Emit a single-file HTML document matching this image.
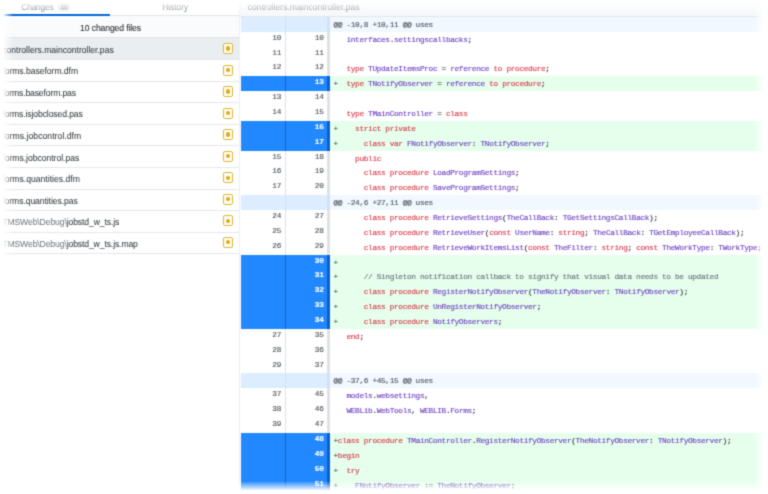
<!DOCTYPE html>
<html lang="en"><head><meta charset="utf-8"><title>Changes</title>
<style>
html,body{margin:0;padding:0;background:#fff;}
body{width:768px;height:494px;overflow:hidden;position:relative;font-family:"Liberation Sans",sans-serif;}
#app{position:absolute;left:0;top:0;width:768px;height:494px;overflow:hidden;background:#fff;filter:url(#soft);}
#side{position:absolute;left:-18.5px;top:0;width:258.9px;height:494px;background:#fff;border-right:1px solid #eceef1;box-sizing:border-box;}
#tabs{position:absolute;left:0;top:0;width:100%;height:16.2px;border-bottom:1px solid #e1e4e8;box-sizing:border-box;background:#fff;}
.tab{position:absolute;top:0;height:16.2px;line-height:14.6px;text-align:center;font-size:8.35px;color:#586069;white-space:nowrap;}
#t1{left:0;width:128.8px;letter-spacing:-0.2px;}
#t1:after{content:"";position:absolute;left:0;right:0;top:14px;height:2.3px;background:#0366d6;}
#t2{left:128.8px;width:129.8px;}
.badge{display:inline-block;letter-spacing:0;background:#dfe2e5;color:#586069;border-radius:6px;font-size:6px;line-height:8px;padding:0 3px;margin-left:4.4px;vertical-align:1px;}
#hdr{position:absolute;left:0;top:16.2px;width:100%;height:22.0px;line-height:25.4px;letter-spacing:-0.11px;background:#fafbfc;border-bottom:1px solid #e1e4e8;box-sizing:border-box;text-align:center;font-size:8.6px;color:#2c3136;padding-left:0.2px;-webkit-text-stroke:0.1px currentColor;}
.f{position:absolute;left:0;width:257.9px;height:21.52px;line-height:23.6px;border-bottom:1px solid #e4e7ea;box-sizing:border-box;font-size:8.6px;color:#363b40;white-space:nowrap;-webkit-text-stroke:0.05px currentColor;}
.f.sel{background:#ebeef1;}
.f span{position:absolute;left:20.8px;top:0;}.f em{font-style:normal;color:#737a82;}
.f i{position:absolute;left:241.1px;top:4.4px;width:10.5px;height:10.8px;box-sizing:border-box;border:1.2px solid #dfb52c;border-radius:1.8px;background:#fdfdfc;}
.f i:after{content:"";position:absolute;left:1.95px;top:2.1px;width:4.2px;height:4.2px;border-radius:50%;background:#e3aa00;}
#dh{position:absolute;left:240.4px;top:0;width:528px;height:16.6px;background:#f6f8fa;border-bottom:1px solid #e2e5e9;box-sizing:border-box;font-size:8.6px;line-height:14px;color:#6a737d;}
#dh span{position:absolute;left:7.4px;top:0;white-space:nowrap;}
#diff{position:absolute;left:240.6px;top:0;width:528px;height:494px;font-family:"Liberation Mono",monospace;font-size:7.8px;letter-spacing:-0.356px;}
.r{position:absolute;left:0;width:528px;height:14.9px;line-height:16.8px;white-space:pre;color:#24292e;}
.g1,.g2{position:absolute;top:0;height:100%;box-sizing:border-box;text-align:right;color:#4d535b;line-height:13.4px;-webkit-text-stroke:0.12px currentColor;}
.g1{left:0;width:45.4px;padding-right:4.0px;border-right:0.8px solid #dfe2e6;}
.g2{left:45.4px;width:44.1px;padding-right:3.6px;border-right:3px solid #dfe2e7;}
.t{position:absolute;left:89.5px;right:0;top:0;height:100%;padding-left:3.4px;-webkit-text-stroke:0.13px currentColor;}
.h .g1,.h .g2{background:#dbedff;border-color:#d0e2f6;}
.h .t{background:#f1f8ff;color:#4f5660;}
.a .g1,.a .g2{background:#2188ff;border-color:#0b5fcf;color:#fff;font-weight:bold;}
.a .g1{border-right-color:#1565c8;}
.a .t{background:#e6ffed;}
.t b{font-weight:normal;-webkit-text-stroke:0;color:#2f3338;}.k{color:#d73a49;}.p{color:#6f42c1;}.c{color:#6a737d;}
.fade{position:absolute;pointer-events:none;}
</style></head><body>
<svg width="0" height="0" style="position:absolute"><defs><filter id="soft" x="0" y="0" width="100%" height="100%" color-interpolation-filters="sRGB"><feConvolveMatrix order="3" kernelMatrix="0.03 0.11 0.03 0.11 0.44 0.11 0.03 0.11 0.03" divisor="1" edgeMode="duplicate" preserveAlpha="true"/></filter></defs></svg>
<div id="app">
<div id="side">
<div id="tabs"><div class="tab" id="t1">Changes<b class="badge" style="font-weight:normal">10</b></div><div class="tab" id="t2">History</div></div>
<div id="hdr">10 changed files</div>
<div class="f sel" style="top:38.2px;height:22.22px;line-height:25px"><span style="letter-spacing:-0.013px">controllers.maincontroller.pas</span><i style="top:5.1px"></i></div>
<div class="f" style="top:60.42px"><span style="letter-spacing:-0.034px">forms.baseform.dfm</span><i></i></div>
<div class="f" style="top:81.94px"><span style="letter-spacing:-0.131px">forms.baseform.pas</span><i></i></div>
<div class="f" style="top:103.46px"><span style="letter-spacing:-0.107px">forms.isjobclosed.pas</span><i></i></div>
<div class="f" style="top:124.98px"><span style="letter-spacing:0.057px">forms.jobcontrol.dfm</span><i></i></div>
<div class="f" style="top:146.50px"><span style="letter-spacing:-0.024px">forms.jobcontrol.pas</span><i></i></div>
<div class="f" style="top:168.02px"><span style="letter-spacing:0.006px">forms.quantities.dfm</span><i></i></div>
<div class="f" style="top:189.54px"><span style="letter-spacing:-0.080px">forms.quantities.pas</span><i></i></div>
<div class="f" style="top:211.06px"><span style="letter-spacing:-0.105px"><em>TMSWeb\Debug\</em>jobstd_w_ts.js</span><i></i></div>
<div class="f" style="top:232.58px"><span style="letter-spacing:-0.108px"><em>TMSWeb\Debug\</em>jobstd_w_ts.js.map</span><i></i></div>
</div>
<div id="diff">
<div class="r h" style="top:16.84px"><div class="g1"></div><div class="g2"></div><div class="t">@@ -10,8 +10,11 @@ uses</div></div>
<div class="r" style="top:31.70px"><div class="g1">10</div><div class="g2">10</div><div class="t">   <span class="p">interfaces</span>.<span class="p">settingscallbacks</span>;</div></div>
<div class="r" style="top:46.56px"><div class="g1">11</div><div class="g2">11</div><div class="t"></div></div>
<div class="r" style="top:61.42px"><div class="g1">12</div><div class="g2">12</div><div class="t">   <span class="k">type</span> <span class="p">TUpdateItemsProc</span> = <span class="p">reference</span> <span class="k">to</span> <span class="k">procedure</span>;</div></div>
<div class="r a" style="top:76.28px"><div class="g1"></div><div class="g2">13</div><div class="t"><b>+</b>  <span class="k">type</span> <span class="p">TNotifyObserver</span> = <span class="p">reference</span> <span class="k">to</span> <span class="k">procedure</span>;</div></div>
<div class="r" style="top:91.14px"><div class="g1">13</div><div class="g2">14</div><div class="t"></div></div>
<div class="r" style="top:106.00px"><div class="g1">14</div><div class="g2">15</div><div class="t">   <span class="k">type</span> <span class="p">TMainController</span> = <span class="k">class</span></div></div>
<div class="r a" style="top:120.86px"><div class="g1"></div><div class="g2">16</div><div class="t"><b>+</b>    <span class="k">strict private</span></div></div>
<div class="r a" style="top:135.72px"><div class="g1"></div><div class="g2">17</div><div class="t"><b>+</b>      <span class="k">class var</span> <span class="p">FNotifyObserver</span>: <span class="p">TNotifyObserver</span>;</div></div>
<div class="r" style="top:150.58px"><div class="g1">15</div><div class="g2">18</div><div class="t">     <span class="k">public</span></div></div>
<div class="r" style="top:165.44px"><div class="g1">16</div><div class="g2">19</div><div class="t">       <span class="k">class procedure</span> <span class="p">LoadProgramSettings</span>;</div></div>
<div class="r" style="top:180.30px"><div class="g1">17</div><div class="g2">20</div><div class="t">       <span class="k">class procedure</span> <span class="p">SaveProgramSettings</span>;</div></div>
<div class="r h" style="top:195.16px"><div class="g1"></div><div class="g2"></div><div class="t">@@ -24,6 +27,11 @@ uses</div></div>
<div class="r" style="top:210.02px"><div class="g1">24</div><div class="g2">27</div><div class="t">       <span class="k">class procedure</span> <span class="p">RetrieveSettings</span>(<span class="p">TheCallBack</span>: <span class="p">TGetSettingsCallBack</span>);</div></div>
<div class="r" style="top:224.88px"><div class="g1">25</div><div class="g2">28</div><div class="t">       <span class="k">class procedure</span> <span class="p">RetrieveUser</span>(<span class="k">const</span> <span class="p">UserName</span>: <span class="k">string</span>; <span class="p">TheCallBack</span>: <span class="p">TGetEmployeeCallBack</span>);</div></div>
<div class="r" style="top:239.74px"><div class="g1">26</div><div class="g2">29</div><div class="t">       <span class="k">class procedure</span> <span class="p">RetrieveWorkItemsList</span>(<span class="k">const</span> <span class="p">TheFilter</span>: <span class="k">string</span>; <span class="k">const</span> <span class="p">TheWorkType</span>: <span class="p">TWorkType</span>;</div></div>
<div class="r a" style="top:254.60px"><div class="g1"></div><div class="g2">30</div><div class="t"><b>+</b></div></div>
<div class="r a" style="top:269.46px"><div class="g1"></div><div class="g2">31</div><div class="t"><b>+</b>      <span class="c">// Singleton notification callback to signify that visual data needs to be updated</span></div></div>
<div class="r a" style="top:284.32px"><div class="g1"></div><div class="g2">32</div><div class="t"><b>+</b>      <span class="k">class procedure</span> <span class="p">RegisterNotifyObserver</span>(<span class="p">TheNotifyObserver</span>: <span class="p">TNotifyObserver</span>);</div></div>
<div class="r a" style="top:299.18px"><div class="g1"></div><div class="g2">33</div><div class="t"><b>+</b>      <span class="k">class procedure</span> <span class="p">UnRegisterNotifyObserver</span>;</div></div>
<div class="r a" style="top:314.04px"><div class="g1"></div><div class="g2">34</div><div class="t"><b>+</b>      <span class="k">class procedure</span> <span class="p">NotifyObservers</span>;</div></div>
<div class="r" style="top:328.90px"><div class="g1">27</div><div class="g2">35</div><div class="t">   <span class="k">end</span>;</div></div>
<div class="r" style="top:343.76px"><div class="g1">28</div><div class="g2">36</div><div class="t"></div></div>
<div class="r" style="top:358.62px"><div class="g1">29</div><div class="g2">37</div><div class="t"></div></div>
<div class="r h" style="top:373.48px"><div class="g1"></div><div class="g2"></div><div class="t">@@ -37,6 +45,15 @@ uses</div></div>
<div class="r" style="top:388.34px"><div class="g1">37</div><div class="g2">45</div><div class="t">   <span class="p">models</span>.<span class="p">websettings</span>,</div></div>
<div class="r" style="top:403.20px"><div class="g1">38</div><div class="g2">46</div><div class="t">   <span class="p">WEBLib</span>.<span class="p">WebTools</span>, <span class="p">WEBLIB</span>.<span class="p">Forms</span>;</div></div>
<div class="r" style="top:418.06px"><div class="g1">39</div><div class="g2">47</div><div class="t"></div></div>
<div class="r a" style="top:432.92px"><div class="g1"></div><div class="g2">48</div><div class="t"><b>+</b><span class="k">class procedure</span> <span class="p">TMainController</span>.<span class="p">RegisterNotifyObserver</span>(<span class="p">TheNotifyObserver</span>: <span class="p">TNotifyObserver</span>);</div></div>
<div class="r a" style="top:447.78px"><div class="g1"></div><div class="g2">49</div><div class="t"><b>+</b><span class="k">begin</span></div></div>
<div class="r a" style="top:462.64px"><div class="g1"></div><div class="g2">50</div><div class="t"><b>+</b>  <span class="k">try</span></div></div>
<div class="r a" style="top:477.50px"><div class="g1"></div><div class="g2">51</div><div class="t"><b>+</b>    <span class="p">FNotifyObserver</span> := <span class="p">TheNotifyObserver</span>;</div></div>
<div class="r a" style="top:492.36px"><div class="g1"></div><div class="g2">52</div><div class="t"><b>+</b>  <span class="k">except</span></div></div>
</div>
<div id="dh"><span>controllers.maincontroller.pas</span></div>
</div>
<div class="fade" style="left:0;top:0;width:768px;height:14px;background:linear-gradient(to bottom,rgba(255,255,255,1) 0,rgba(255,255,255,.6) 45%,rgba(255,255,255,0) 100%)"></div>
<div class="fade" style="left:0;top:0;width:13px;height:494px;background:linear-gradient(to right,#fff 0,#fff 23%,rgba(255,255,255,.5) 58%,rgba(255,255,255,0) 100%)"></div>
<div class="fade" style="left:754px;top:0;width:14px;height:494px;background:linear-gradient(to right,rgba(255,255,255,0) 0,rgba(255,255,255,1) 72%,#fff 100%)"></div>
<div class="fade" style="left:0;top:481px;width:768px;height:13px;background:linear-gradient(to bottom,rgba(255,255,255,0) 0,rgba(255,255,255,1) 75%,#fff 100%)"></div>
</body></html>
